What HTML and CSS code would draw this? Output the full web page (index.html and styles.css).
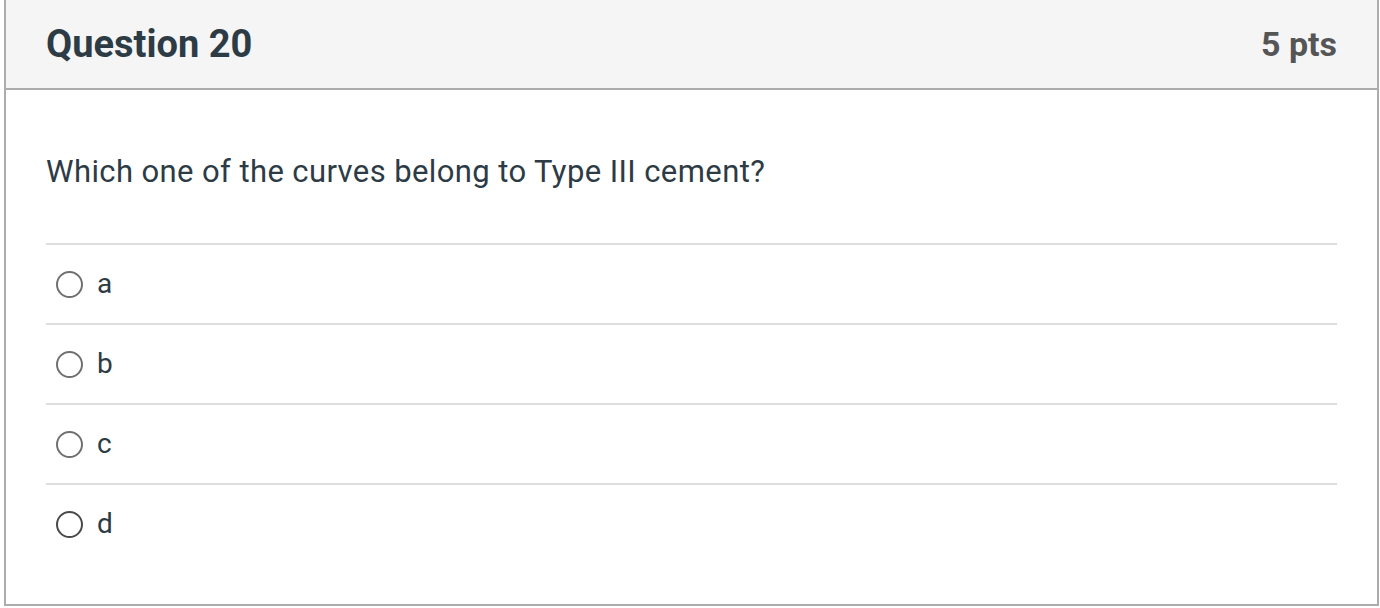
FILE: index.html
```html
<!DOCTYPE html>
<html>
<head>
<meta charset="utf-8">
<link rel="stylesheet" href="styles.css">
</head>
<body>
<div class="question">
  <div class="q-header">
    <h2 class="q-title">Question 20</h2>
    <span class="q-points">5 pts</span>
  </div>
  <div class="q-body">
    <p class="q-text">Which one of the curves belong to Type III cement?</p>
    <ul class="answers">
      <li class="answer"><span class="radio"></span><span class="label">a</span></li>
      <li class="answer"><span class="radio"></span><span class="label">b</span></li>
      <li class="answer"><span class="radio"></span><span class="label">c</span></li>
      <li class="answer"><span class="radio dark"></span><span class="label">d</span></li>
    </ul>
  </div>
</div>
</body>
</html>
```
FILE: styles.css
```css
html, body {
  margin: 0;
  padding: 0;
  background: #ffffff;
}
body {
  font-family: Roboto, "Liberation Sans", Arial, sans-serif;
  color: #2d3b45;
}
.question {
  margin-left: 4px;
  width: 1371px;
  height: 604px;
  border-left: 2px solid #acacac;
  border-right: 2px solid #acacac;
  border-bottom: 2px solid #acacac;
  display: flex;
  flex-direction: column;
}
.q-header {
  height: 88px;
  background: #f5f5f5;
  border-bottom: 2px solid #acacac;
  padding: 0 40px;
  display: flex;
  align-items: center;
  justify-content: space-between;
  flex-shrink: 0;
}
.q-title {
  margin: 0;
  font-size: 38px;
  font-weight: 700;
  color: #2d3b45;
  line-height: 1;
}
.q-points {
  font-size: 34px;
  font-weight: 700;
  color: #555555;
  line-height: 1;
}
.q-body {
  padding: 61px 40px 0 40px;
}
.q-text {
  margin: 0;
  font-size: 31px;
  letter-spacing: 0.4px;
  line-height: 42px;
}
.answers {
  list-style: none;
  margin: 50px 0 0 0;
  padding: 0;
}
.answer {
  border-top: 2px solid #dddddd;
  height: 78px;
  display: flex;
  align-items: center;
  padding-left: 10px;
  font-size: 28px;
}
.radio {
  width: 23px;
  height: 23px;
  border: 2px solid #707070;
  border-radius: 50%;
  flex-shrink: 0;
  margin-right: 14px;
}
.radio.dark {
  border-color: #4a4a4a;
}
.label {
  line-height: 1;
}
```
